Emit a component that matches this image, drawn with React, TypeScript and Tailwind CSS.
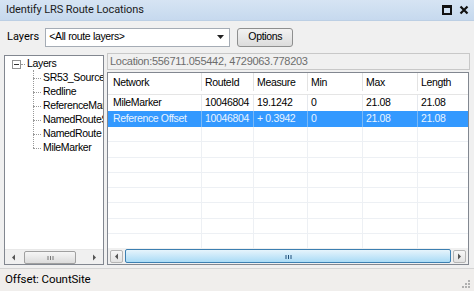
import React from 'react'

const font = { fontFamily: '"Liberation Sans", Arial, sans-serif' }
const uiFont = { fontFamily: 'Roboto, "Liberation Sans", sans-serif' }

const cols = [
  { name: 'Network', w: 'w-[92px]' },
  { name: 'RouteId', w: 'w-[52px]' },
  { name: 'Measure', w: 'w-[54px]' },
  { name: 'Min', w: 'w-[55px]' },
  { name: 'Max', w: 'w-[55px]' },
  { name: 'Length', w: 'w-[51px]' },
]

const rows = [
  ['MileMarker', '10046804', '19.1242', '0', '21.08', '21.08'],
  ['Reference Offset', '10046804', '+ 0.3942', '0', '21.08', '21.08'],
]

const layers = ['SR53_Source', 'Redline', 'ReferenceMarker', 'NamedRouteSet', 'NamedRoute', 'MileMarker']

function Arrow({ dir }: { dir: 'l' | 'r' }) {
  return (
    <svg width="5" height="7" viewBox="0 0 5 7">
      {dir === 'l' ? <path d="M4 0.5 L1 3.5 L4 6.5 Z" fill="#555" /> : <path d="M1 0.5 L4 3.5 L1 6.5 Z" fill="#555" />}
    </svg>
  )
}

function Grip({ color }: { color: string }) {
  return (
    <svg width="7" height="5" viewBox="0 0 7 5">
      <path d="M1 1v4M3.5 1v4M6 1v4" stroke={color} strokeWidth="1" />
    </svg>
  )
}

export default function App() {
  return (
    <div className="w-[474px] h-[291px] bg-[#f0f0f0] flex flex-col overflow-hidden text-[10.5px] text-black tracking-[-0.35px]" style={font}>
      {/* Title bar */}
      <div className="h-[21px] shrink-0 flex items-center justify-between pl-[6px] pr-[5px] bg-gradient-to-b from-[#d6e4f3] to-[#c6d9ee] border-b border-[#bccfe4]">
        <span className="text-[11px] tracking-[-0.1px] text-[#1b1b1b]" style={uiFont}>Identify LRS Route Locations</span>
        <div className="flex items-center gap-[7px]">
          <div className="w-[10px] h-[10px] border-2 border-t-[3px] border-[#111]" />
          <svg width="10" height="10" viewBox="0 0 10 10">
            <path d="M1.5 1.5 L8.5 8.5 M8.5 1.5 L1.5 8.5" stroke="#111" strokeWidth="2.2" />
          </svg>
        </div>
      </div>

      {/* Toolbar */}
      <div className="h-[32px] shrink-0 flex items-center pl-[7px]">
        <span className="text-[11px] tracking-[0px] mr-[6px]" style={uiFont}>Layers</span>
        <div className="w-[185px] h-[19px] border border-[#a5acb5] bg-white flex items-center justify-between pl-[3px] pr-[5px]">
          <span>&lt;All route layers&gt;</span>
          <svg width="7" height="4" viewBox="0 0 7 4"><path d="M0 0 H7 L3.5 4 Z" fill="#222" /></svg>
        </div>
        <button className="ml-[7px] w-[56px] h-[19px] rounded-[3px] border border-[#8e8f8f] bg-gradient-to-b from-[#f2f2f2] to-[#dcdcdc] flex items-center justify-center">
          Options
        </button>
      </div>

      {/* Main */}
      <div className="flex-1 flex gap-[3px] px-[4px] min-h-0">
        {/* Tree */}
        <div className="w-[100px] shrink-0 border border-[#828790] bg-white flex flex-col mt-[2px] mb-[3px]">
          <div className="flex-1 relative pt-[1px] pl-[7px] overflow-hidden">
            <div className="flex items-center h-[14px]">
              <div className="w-[9px] h-[9px] shrink-0 border border-[#919191] flex items-center justify-center bg-white">
                <div className="w-[5px] h-px bg-[#333]" />
              </div>
              <div className="w-[4px] shrink-0 border-t border-dotted border-[#999]" />
              <span className="ml-[2px]">Layers</span>
            </div>
            <div className="absolute left-[28px] top-[14px] h-[78px] border-l border-dotted border-[#999]" />
            {layers.map(l => (
              <div key={l} className="flex items-center h-[14px] pl-[21px]">
                <div className="w-[8px] shrink-0 border-t border-dotted border-[#999]" />
                <span className="ml-[2px] whitespace-nowrap">{l}</span>
              </div>
            ))}
          </div>
          <div className="h-[15px] shrink-0 flex items-center bg-[#f0f0f0] border-t border-[#e8e8e8] px-[1px]">
            <div className="w-[15px] flex justify-center"><Arrow dir="l" /></div>
            <div className="w-[52px] h-[13px] ml-[3px] rounded-[2px] border border-[#a0a0a0] bg-gradient-to-b from-[#f6f6f6] to-[#dcdcdc] flex items-center justify-center">
              <Grip color="#777" />
            </div>
            <div className="flex-1" />
            <div className="w-[15px] flex justify-center"><Arrow dir="r" /></div>
          </div>
        </div>

        {/* Right panel */}
        <div className="flex-1 flex flex-col gap-[2px] min-w-0">
          <div className="h-[17px] shrink-0 border border-[#c8c8c8] bg-[#f0f0f0] flex items-center pl-[2px] text-[#6d6d6d] text-[11px] tracking-[-0.3px] whitespace-nowrap">
            Location:556711.055442, 4729063.778203
          </div>
          <div className="flex-1 border border-[#828790] bg-white flex flex-col min-h-0 mb-[3px] mr-[1px]">
            <div className="flex-1 relative overflow-hidden">
              {/* header */}
              <div className="flex h-[22px] items-end pb-[3px] pl-[2px] border-b border-[#e5e5e5]">
                {cols.map((c, i) => (
                  <div key={c.name} className={`${c.w} shrink-0 pl-[3px] h-full flex items-end whitespace-nowrap overflow-hidden ${i < cols.length - 1 ? 'border-r border-[#e3e3e3]' : ''}`}>
                    {c.name}
                  </div>
                ))}
              </div>
              {rows.map((r, ri) => (
                <div key={ri} className={`flex h-[16px] items-center pl-[2px] ${ri === 1 ? 'bg-[#3399ff] text-[#e8f3ff]' : ''}`}>
                  {r.map((v, i) => (
                    <div key={i} className={`${cols[i].w} shrink-0 pl-[3px] h-full flex items-center whitespace-nowrap overflow-hidden border-r ${ri === 1 ? 'border-[#7ab8f5]' : 'border-[#e6e9ee]'}`}>
                      {v}
                    </div>
                  ))}
                </div>
              ))}
              {Array.from({ length: 8 }).map((_, i) => (
                <div key={i} className="flex h-[15.3px] pl-[2px] border-b border-[#edf0f4]">
                  {cols.map((c, ci) => (
                    <div key={ci} className={`${c.w} shrink-0 h-full border-r border-[#edf0f4]`} />
                  ))}
                </div>
              ))}
            </div>
            <div className="h-[16px] shrink-0 flex items-center bg-[#f0f0f0] px-[2px] gap-[2px]">
              <div className="w-[13px] h-[13px] rounded-[2px] border border-[#b5b5b5] bg-gradient-to-b from-[#f7f7f7] to-[#e2e2e2] flex items-center justify-center"><Arrow dir="l" /></div>
              <div className="flex-1 h-[14px] rounded-[2px] border border-[#3c7fb1] bg-gradient-to-b from-[#e6f4fc] to-[#a9dbf6] flex items-center justify-center">
                <Grip color="#1e4f7a" />
              </div>
              <div className="w-[13px] h-[13px] rounded-[2px] border border-[#b5b5b5] bg-gradient-to-b from-[#f7f7f7] to-[#e2e2e2] flex items-center justify-center"><Arrow dir="r" /></div>
            </div>
          </div>
        </div>
      </div>

      {/* Status bar */}
      <div className="h-[23px] shrink-0 border-t border-[#d4d4d4] bg-[#f0eeec] flex items-center justify-between pl-[5px] pr-[3px]">
        <span className="text-[11.5px] tracking-[-0.1px]" style={uiFont}>Offset: CountSite</span>
        <svg width="10" height="10" viewBox="0 0 10 10" className="self-end mb-[2px]">
          <g fill="#b0b0b0">
            <rect x="7" y="1" width="2" height="2" />
            <rect x="4" y="4" width="2" height="2" />
            <rect x="7" y="4" width="2" height="2" />
            <rect x="1" y="7" width="2" height="2" />
            <rect x="4" y="7" width="2" height="2" />
            <rect x="7" y="7" width="2" height="2" />
          </g>
        </svg>
      </div>
    </div>
  )
}
